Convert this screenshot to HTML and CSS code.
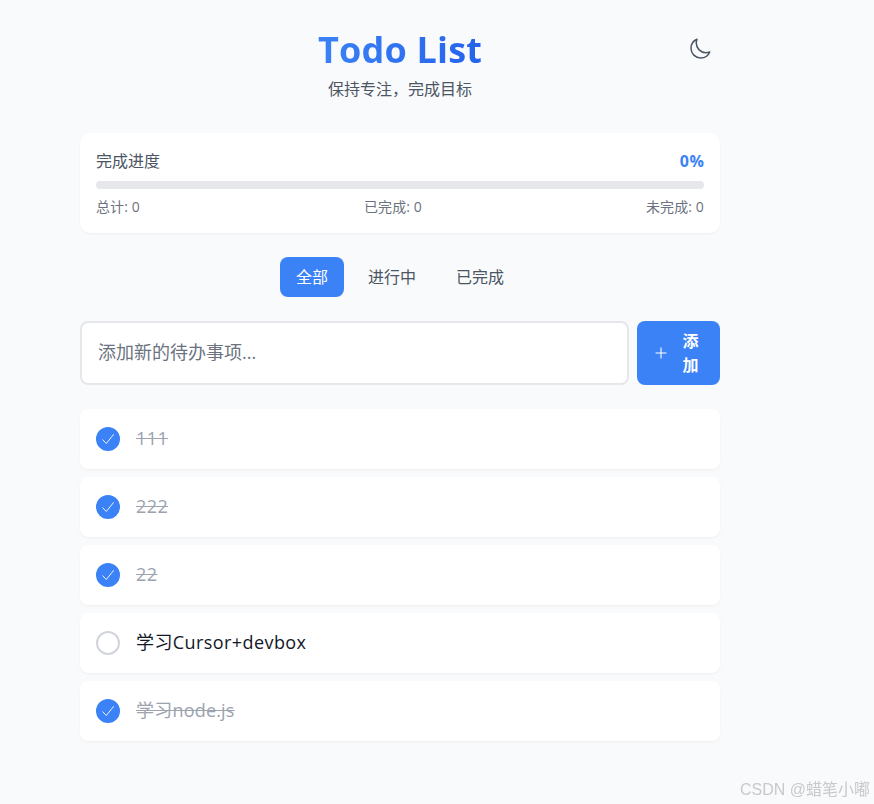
FILE: index.html
```html
<!DOCTYPE html>
<html lang="zh-CN">
<head>
<meta charset="utf-8">
<title>Todo List</title>
<link rel="stylesheet" href="styles.css">
</head>
<body>
<main class="app">
  <header class="header">
    <div></div>
    <div class="brand">
      <h1 class="title">Todo List</h1>
      <p class="subtitle">保持专注，完成目标</p>
    </div>
    <button class="theme" aria-label="theme">
      <svg class="moon" viewBox="0 0 24 24" fill="none" stroke="currentColor" stroke-width="1.5" stroke-linecap="round" stroke-linejoin="round"><path d="M21.752 15.002A9.718 9.718 0 0118 15.75c-5.385 0-9.75-4.365-9.75-9.75 0-1.33.266-2.597.748-3.752A9.753 9.753 0 003 11.25C3 16.635 7.365 21 12.75 21a9.753 9.753 0 009.002-5.998z"/></svg>
    </button>
  </header>

  <section class="card progress">
    <div class="progress-head"><span class="progress-label">完成进度</span><span class="progress-value">0%</span></div>
    <div class="bar"></div>
    <div class="stats"><span>总计: 0</span><span>已完成: 0</span><span>未完成: 0</span></div>
  </section>

  <nav class="tabs">
    <button class="tab active">全部</button>
    <button class="tab">进行中</button>
    <button class="tab">已完成</button>
  </nav>

  <form class="add">
    <input class="add-input" type="text" placeholder="添加新的待办事项...">
    <button class="add-btn" type="button">
      <svg class="plus" viewBox="0 0 16 16" fill="none" stroke="currentColor" stroke-width="1.1"><path d="M8 2.5v11M2.5 8h11"/></svg>
      <span class="add-text">添加</span>
    </button>
  </form>

  <ul class="list">
    <li class="item done"><span class="check"><svg viewBox="0 0 16 16" fill="none" stroke="currentColor" stroke-width=".9"><path d="M2.5 8.5l3.8 4 7.4-9.2"/></svg></span><span class="text">111</span></li>
    <li class="item done"><span class="check"><svg viewBox="0 0 16 16" fill="none" stroke="currentColor" stroke-width=".9"><path d="M2.5 8.5l3.8 4 7.4-9.2"/></svg></span><span class="text">222</span></li>
    <li class="item done"><span class="check"><svg viewBox="0 0 16 16" fill="none" stroke="currentColor" stroke-width=".9"><path d="M2.5 8.5l3.8 4 7.4-9.2"/></svg></span><span class="text">22</span></li>
    <li class="item"><span class="check"></span><span class="text">学习Cursor+devbox</span></li>
    <li class="item done"><span class="check"><svg viewBox="0 0 16 16" fill="none" stroke="currentColor" stroke-width=".9"><path d="M2.5 8.5l3.8 4 7.4-9.2"/></svg></span><span class="text tight">学习node.js</span></li>
  </ul>
</main>
<div class="watermark">CSDN @蜡笔小嘟</div>
</body>
</html>
```

FILE: styles.css
```css
* { box-sizing: border-box; }
html, body { margin: 0; height: 100%; overflow: hidden; }
body {
  background: #f9fafb;
  color: #111827;
  font-family: "Open Sans", "Noto Sans CJK SC", sans-serif;
}
.app {
  width: 800px;
  padding: 30px 80px 0;
}
.header {
  display: grid;
  grid-template-columns: 1fr auto 1fr;
  align-items: start;
  margin-bottom: 32px;
}
.brand { text-align: center; }
.title {
  margin: 0 0 7px;
  font-size: 36px;
  line-height: 40px;
  font-weight: 700;
  letter-spacing: .2px;
  background: linear-gradient(90deg, #3b82f6, #2563eb);
  -webkit-background-clip: text;
  background-clip: text;
  color: transparent;
}
.subtitle {
  margin: 0;
  font-size: 16px;
  line-height: 24px;
  color: #4b5563;
}
.theme {
  justify-self: end;
  width: 40px;
  height: 40px;
  margin-top: -1px;
  padding: 8px;
  border: 0;
  background: none;
  color: #4b5563;
}
.moon { display: block; width: 24px; height: 24px; }
.card, .item {
  background: #fff;
  box-shadow: 0 1px 2px rgba(0, 0, 0, .05);
}
.progress {
  padding: 16px;
  border-radius: 10px;
  margin-bottom: 24px;
}
.progress-head {
  display: flex;
  justify-content: space-between;
  line-height: 24px;
  font-size: 16px;
  margin-bottom: 8px;
}
.progress-label { font-size: 16px; color: #4b5563; }
.progress-value { font-weight: 700; letter-spacing: .6px; margin-right: -.6px; color: #3b82f6; }
.bar {
  height: 8px;
  border-radius: 4px;
  background: #e5e7eb;
  margin-bottom: 8px;
}
.stats {
  display: flex;
  justify-content: space-between;
  font-size: 14px;
  line-height: 20px;
  letter-spacing: .12px;
  color: #6b7280;
}
.tabs {
  display: flex;
  justify-content: center;
  gap: 8px;
  margin-bottom: 24px;
}
.tab {
  height: 40px;
  padding: 0 16px;
  border: 0;
  border-radius: 8px;
  background: none;
  color: #4b5563;
  font: inherit;
  font-size: 16px;
  line-height: 24px;
}
.tab.active { background: #3b82f6; color: #fff; }
.add {
  display: flex;
  gap: 8px;
  margin-bottom: 24px;
}
.add-input {
  flex: 1;
  min-width: 0;
  height: 64px;
  padding: 0 16px 2px;
  border: 2px solid #e5e7eb;
  border-radius: 8px;
  background: #fff;
  font: inherit;
  font-size: 18px;
  outline: none;
}
.add-input::placeholder { color: #6b7280; opacity: 1; }
.add-btn {
  flex: none;
  width: 83px;
  height: 64px;
  padding: 0 16px;
  display: flex;
  align-items: center;
  gap: 8px;
  border: 0;
  border-radius: 8px;
  background: #3b82f6;
  color: #fff;
  font: inherit;
  font-weight: 700;
  font-size: 16px;
  line-height: 24px;
}
.plus { flex: none; width: 16px; height: 16px; }
.add-text { flex: 1; width: 27px; text-align: center; }
.list {
  list-style: none;
  margin: 0;
  padding: 0;
  display: flex;
  flex-direction: column;
  gap: 8px;
}
.item {
  display: flex;
  align-items: center;
  gap: 16px;
  height: 60px;
  padding: 0 16px;
  border-radius: 8px;
}
.check {
  flex: none;
  display: flex;
  align-items: center;
  justify-content: center;
  width: 24px;
  height: 24px;
  border: 2px solid #d1d5db;
  border-radius: 50%;
  color: #fff;
}
.check svg { width: 16px; height: 16px; }
.done .check { background: #3b82f6; border-color: #3b82f6; }
.text { font-size: 18px; line-height: 28px; padding-bottom: 2px; letter-spacing: .42px; }
.text.tight { letter-spacing: .2px; }
.done .text { color: #9ca3af; text-decoration: line-through; }
.watermark {
  position: absolute;
  right: 4px;
  top: 779px;
  font-size: 16px;
  line-height: 22px;
  color: #c8c9cc;
  font-family: "Liberation Sans", "Noto Sans CJK SC", sans-serif;
  filter: blur(.3px);
}
```
